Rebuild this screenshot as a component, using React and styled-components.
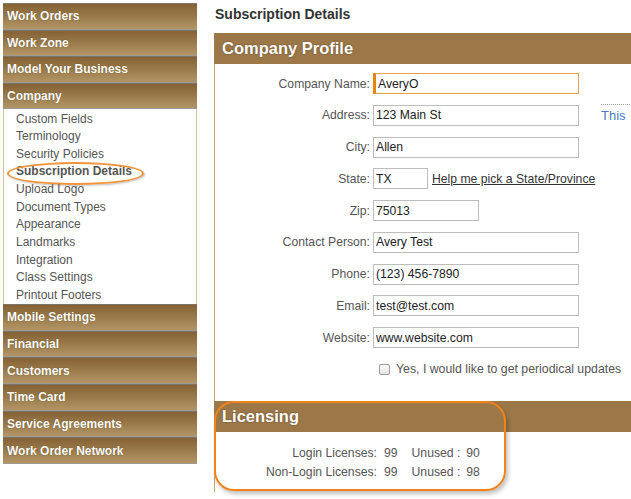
import React from "react";
import styled, { createGlobalStyle } from "styled-components";

const Global = createGlobalStyle`
  html, body { margin: 0; padding: 0; background: #fff; overflow: hidden; }
  body { font-family: "Liberation Sans", Arial, sans-serif; }
`;

const Page = styled.div`
  display: flex;
  align-items: flex-start;
  width: 631px;
  height: 499px;
  overflow: hidden;
`;

const Sidebar = styled.nav`
  flex: 0 0 194px;
  margin: 3px 0 0 3px;
  display: flex;
  flex-direction: column;
`;

const NavItem = styled.div`
  box-sizing: border-box;
  height: ${(p) => p.$h || 26.6}px;
  padding-left: 4px;
  display: flex;
  align-items: center;
  font-size: 12px;
  font-weight: bold;
  color: #fff;
  text-shadow: 0 0 1px rgba(60, 40, 10, 0.6);
  background: linear-gradient(to bottom, #856235 0%, #9a7a4a 50%, #b39565 100%);
  border-top: 1px solid #7c7669;
  border-bottom: 1px solid #9c9a94;
  white-space: nowrap;
`;

const SubList = styled.div`
  background: #fff;
  border-left: 1px solid #d6c4a4;
  border-right: 1px solid #d6c4a4;
  padding: 0.5px 0 0.5px;
  display: flex;
  flex-direction: column;
`;

const SubItem = styled.div`
  position: relative;
  height: 17.65px;
  line-height: 19px;
  padding-left: 12px;
  font-size: 12px;
  color: #555;
  font-weight: ${(p) => (p.$active ? "bold" : "normal")};
  white-space: nowrap;
`;

const Ellipse = styled.span`
  position: absolute;
  left: 3px;
  top: -0.5px;
  width: 137px;
  height: 23px;
  border: 2px solid #f2953a;
  border-radius: 50%;
  box-shadow: 1px 1px 2px rgba(0, 0, 0, 0.25);
  box-sizing: border-box;
  pointer-events: none;
`;

const Main = styled.main`
  flex: 0 0 560px;
  margin-left: 17px;
  padding-top: 6px;
`;

const Title = styled.h1`
  margin: 0 0 11px 1px;
  font-size: 14px;
  line-height: 16px;
  font-weight: bold;
  color: #333;
`;

const Panel = styled.section`
  position: relative;
`;

const PanelHeader = styled.div`
  height: 31px;
  box-sizing: border-box;
  padding-left: 8px;
  display: flex;
  align-items: center;
  background: #9c7849;
  color: #fff;
  font-size: 16.5px;
  font-weight: bold;
  text-shadow: 0 0 2px rgba(50, 30, 5, 0.5);
`;

const PanelBody = styled.div`
  border-left: 1px solid #c9a46f;
  padding: ${(p) => p.$pad};
`;

const Form = styled.div`
  display: grid;
  grid-template-columns: 155px 206px 100px;
  column-gap: 3px;
  row-gap: 10.75px;
  grid-auto-rows: 21px;
  align-items: center;
`;

const Label = styled.label`
  grid-column: 1;
  text-align: right;
  font-size: 12.2px;
  color: #555;
  white-space: nowrap;
`;

const Cell = styled.div`
  grid-column: 2;
  display: flex;
  align-items: center;
  gap: 4px;
  white-space: nowrap;
`;

const Input = styled.input`
  box-sizing: border-box;
  width: ${(p) => p.$w || 206}px;
  height: 21px;
  margin: 0;
  padding: 0 0 0 2px;
  font-family: "Liberation Sans", Arial, sans-serif;
  font-size: 12.2px;
  color: #222;
  background: #fff;
  border: 1px solid ${(p) => (p.$focus ? "#ef9f45" : "#bdbdbd")};
  border-left: ${(p) => (p.$focus ? "3px solid #e8820f" : "1px solid #bdbdbd")};
  outline: none;
`;

const HelpLink = styled.a`
  font-size: 12.2px;
  color: #333;
  text-decoration: underline;
`;

const Aside = styled.div`
  grid-column: 3;
  margin-left: 19px;
  align-self: start;
  height: 21px;
  box-sizing: border-box;
  border-top: 1px dotted #9a9a9a;
  margin-top: -1px;
  padding-top: 2px;
  font-size: 13px;
  line-height: 17px;
  color: #4a7fc4;
  white-space: nowrap;
  overflow: hidden;
`;

const CheckRow = styled.div`
  grid-column: 2 / span 2;
  display: flex;
  align-items: center;
  gap: 6px;
  padding-left: 6px;
  font-size: 12.3px;
  color: #555;
  white-space: nowrap;
`;

const CheckBox = styled.span`
  width: 11px;
  height: 11px;
  box-sizing: border-box;
  border: 1px solid #9a9a9a;
  border-radius: 2px;
  background: linear-gradient(#fdfdfd, #e4e4e4);
`;

const LicRow = styled.div`
  display: flex;
  height: 19.5px;
  align-items: center;
  font-size: 12.2px;
  color: #555;
  white-space: nowrap;
`;

const LicLabel = styled.span`
  width: 162px;
  text-align: right;
`;

const LicValue = styled.span`
  margin-left: ${(p) => p.$ml}px;
`;

const Highlight = styled.div`
  position: absolute;
  left: 0;
  top: 0;
  width: 292px;
  height: 90px;
  box-sizing: border-box;
  border: 2px solid #f0841a;
  border-radius: 20px;
  box-shadow: 2px 3px 4px rgba(0, 0, 0, 0.25);
  pointer-events: none;
`;

const topNav = ["Work Orders", "Work Zone", "Model Your Business", "Company"];
const subNav = [
  "Custom Fields",
  "Terminology",
  "Security Policies",
  "Subscription Details",
  "Upload Logo",
  "Document Types",
  "Appearance",
  "Landmarks",
  "Integration",
  "Class Settings",
  "Printout Footers",
];
const bottomNav = [
  "Mobile Settings",
  "Financial",
  "Customers",
  "Time Card",
  "Service Agreements",
  "Work Order Network",
];

export default function App() {
  return (
    <>
      <Global />
      <Page>
        <Sidebar>
          {topNav.map((t) => (
            <NavItem key={t} $h={26.5}>{t}</NavItem>
          ))}
          <SubList>
            {subNav.map((t) => (
              <SubItem key={t} $active={t === "Subscription Details"}>
                {t}
                {t === "Subscription Details" && <Ellipse />}
              </SubItem>
            ))}
          </SubList>
          {bottomNav.map((t) => (
            <NavItem key={t} $h={26.67}>{t}</NavItem>
          ))}
        </Sidebar>

        <Main>
          <Title>Subscription Details</Title>
          <Panel>
            <PanelHeader>Company Profile</PanelHeader>
            <PanelBody $pad="9px 0 21px 0">
              <Form>
                <Label>Company Name:</Label>
                <Cell><Input $focus readOnly value="AveryO" /></Cell>
                <Label>Address:</Label>
                <Cell><Input readOnly value="123 Main St" /></Cell>
                <Aside>This</Aside>
                <Label>City:</Label>
                <Cell><Input readOnly value="Allen" /></Cell>
                <Label>State:</Label>
                <Cell>
                  <Input $w={55} readOnly value="TX" />
                  <HelpLink>Help me pick a State/Province</HelpLink>
                </Cell>
                <Label>Zip:</Label>
                <Cell><Input $w={106} readOnly value="75013" /></Cell>
                <Label>Contact Person:</Label>
                <Cell><Input readOnly value="Avery Test" /></Cell>
                <Label>Phone:</Label>
                <Cell><Input readOnly value="(123) 456-7890" /></Cell>
                <Label>Email:</Label>
                <Cell><Input readOnly value="test@test.com" /></Cell>
                <Label>Website:</Label>
                <Cell><Input readOnly value="www.website.com" /></Cell>
                <CheckRow>
                  <CheckBox />
                  Yes, I would like to get periodical updates
                </CheckRow>
              </Form>
            </PanelBody>
          </Panel>
          <Panel>
            <PanelHeader>Licensing</PanelHeader>
            <PanelBody $pad="11px 0 10px 0">
              <LicRow>
                <LicLabel>Login Licenses:</LicLabel>
                <LicValue $ml={7}>99</LicValue>
                <LicValue $ml={14}>Unused :</LicValue>
                <LicValue $ml={6}>90</LicValue>
              </LicRow>
              <LicRow>
                <LicLabel>Non-Login Licenses:</LicLabel>
                <LicValue $ml={7}>99</LicValue>
                <LicValue $ml={14}>Unused :</LicValue>
                <LicValue $ml={6}>98</LicValue>
              </LicRow>
            </PanelBody>
            <Highlight />
          </Panel>
        </Main>
      </Page>
    </>
  );
}
